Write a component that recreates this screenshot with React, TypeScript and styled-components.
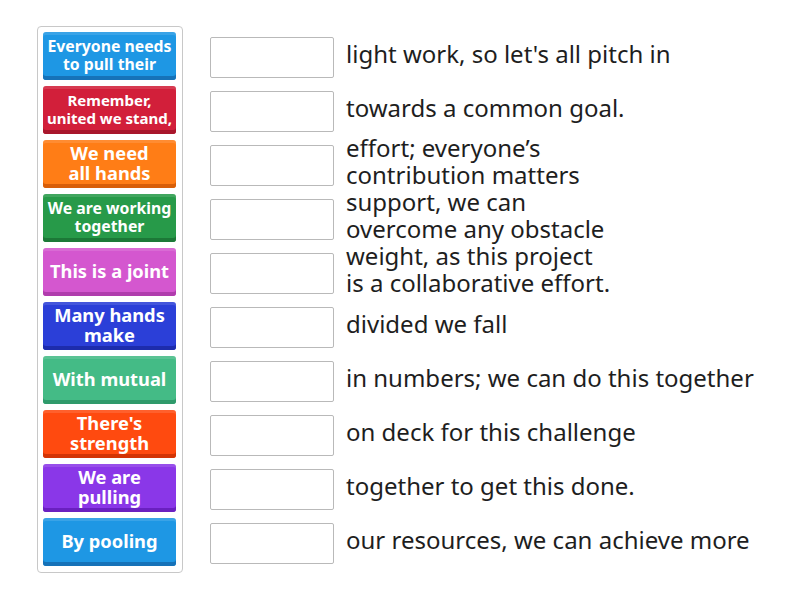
import React from 'react';
import styled, { createGlobalStyle } from 'styled-components';

const GlobalStyle = createGlobalStyle`
  html, body {
    margin: 0;
    padding: 0;
    background: #fff;
    font-family: "Noto Sans", "Open Sans", sans-serif;
  }
`;

const Page = styled.div`
  display: flex;
  align-items: flex-start;
  gap: 27px;
  padding: 26px 0 0 37px;
`;

const TilePanel = styled.div`
  display: flex;
  flex-direction: column;
  gap: 6px;
  padding: 5px 6px 6px 5px;
  border: 1px solid #c8c8c8;
  border-radius: 4px;
`;

const Tile = styled.div<{ color: string; dark: string; size: number }>`
  box-sizing: border-box;
  width: 133px;
  height: 48px;
  display: flex;
  align-items: center;
  justify-content: center;
  text-align: center;
  padding: 0 2px 3px;
  border-radius: 3px;
  background: ${({ color }) => color};
  box-shadow: inset 0 -4px 0 ${({ dark }) => dark}, inset 0 3px 0 rgba(255, 255, 255, 0.12);
  color: #fff;
  font-weight: 700;
  font-size: ${({ size }) => size}px;
  line-height: ${({ size }) => (size > 17 ? 20 : 18)}px;
  white-space: nowrap;
`;

const Answers = styled.div`
  display: flex;
  flex-direction: column;
  gap: 6px;
  padding-top: 6px;
`;

const AnswerRow = styled.div`
  height: 48px;
  display: flex;
  align-items: center;
  gap: 12px;
`;

const DropBox = styled.div`
  box-sizing: border-box;
  width: 124px;
  height: 41px;
  margin-top: 2px;
  border: 1px solid #b9b9b9;
  border-radius: 2px;
  background: #fff;
  flex-shrink: 0;
`;

const AnswerText = styled.div`
  margin-bottom: 6px;
  font-size: 24px;
  line-height: 27px;
  color: #1e1e1e;
  white-space: nowrap;
`;

const tiles: { text: React.ReactNode; color: string; dark: string; size: number }[] = [
  { text: <>Everyone needs<br />to pull their</>, color: '#1e97e4', dark: '#1672b8', size: 15.8 },
  { text: <>Remember,<br />united we stand,</>, color: '#d21f3a', dark: '#a8162c', size: 15 },
  { text: <>We need<br />all hands</>, color: '#ff7d16', dark: '#d85e08', size: 18.3 },
  { text: <>We are working<br />together</>, color: '#279a49', dark: '#1c7837', size: 15.8 },
  { text: 'This is a joint', color: '#d457cf', dark: '#b03cad', size: 18.3 },
  { text: <>Many hands<br />make</>, color: '#2b3fd8', dark: '#1d2cac', size: 18.3 },
  { text: 'With mutual', color: '#44bb86', dark: '#2f9a6b', size: 18.3 },
  { text: <>There's<br />strength</>, color: '#ff4a0f', dark: '#d33405', size: 18.3 },
  { text: <>We are<br />pulling</>, color: '#8a37e8', dark: '#6a20c0', size: 18.3 },
  { text: 'By pooling', color: '#1e97e4', dark: '#1672b8', size: 18.3 },
];

const answers: React.ReactNode[] = [
  "light work, so let's all pitch in",
  'towards a common goal.',
  <>effort; everyone’s<br />contribution matters</>,
  <>support, we can<br />overcome any obstacle</>,
  <>weight, as this project<br />is a collaborative effort.</>,
  'divided we fall',
  'in numbers; we can do this together',
  'on deck for this challenge',
  'together to get this done.',
  'our resources, we can achieve more',
];

export default function App() {
  return (
    <>
      <GlobalStyle />
      <Page>
        <TilePanel>
          {tiles.map((t, i) => (
            <Tile key={i} color={t.color} dark={t.dark} size={t.size}>{t.text}</Tile>
          ))}
        </TilePanel>
        <Answers>
          {answers.map((a, i) => (
            <AnswerRow key={i}>
              <DropBox />
              <AnswerText>{a}</AnswerText>
            </AnswerRow>
          ))}
        </Answers>
      </Page>
    </>
  );
}
